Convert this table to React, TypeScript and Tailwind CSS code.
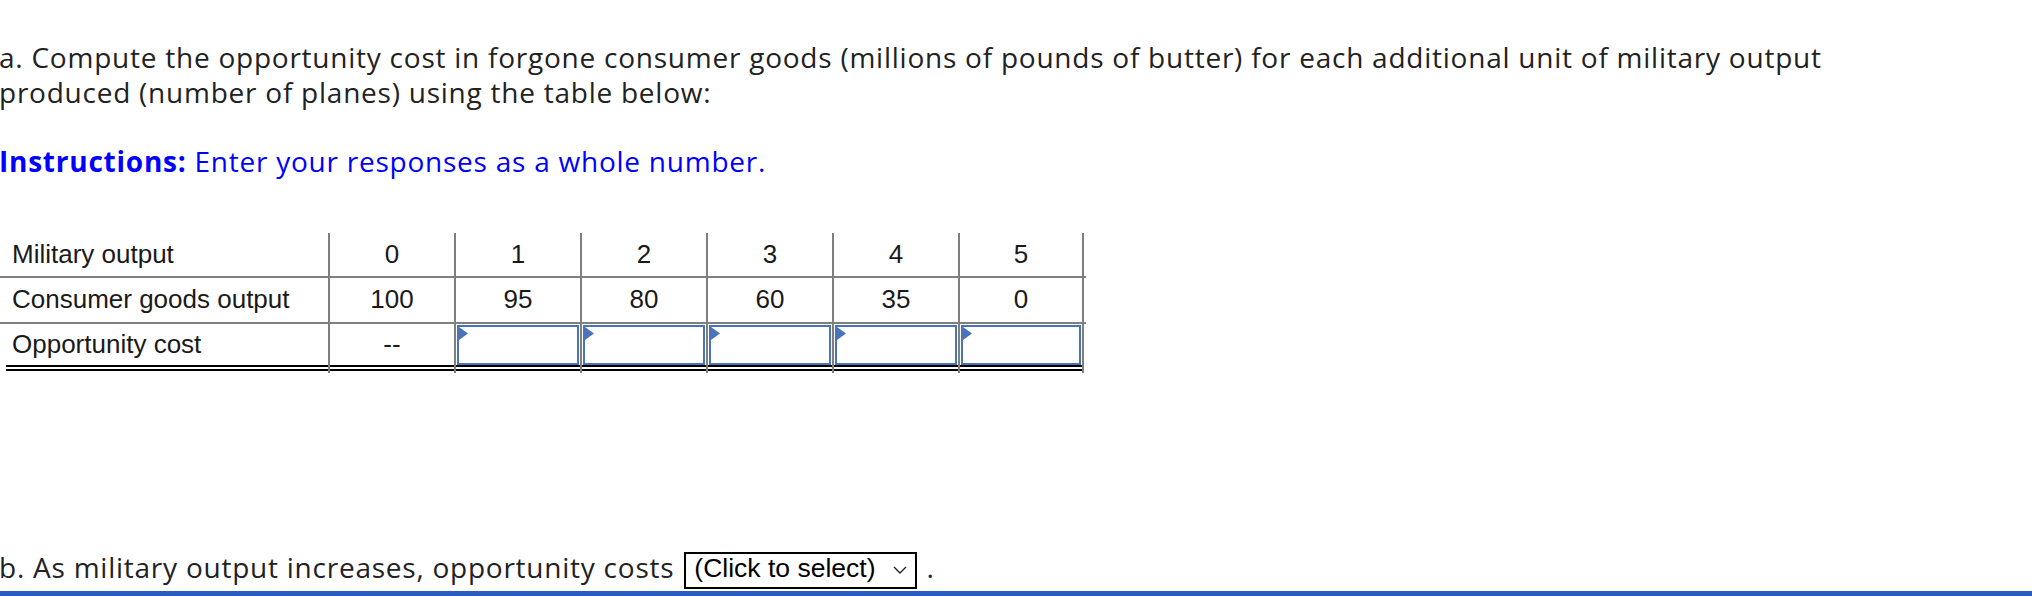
import React from "react"

const consumer = [100, 95, 80, 60, 35, 0]

const Row: React.FC<{ label: string; height: string; children: React.ReactNode; last?: boolean }> = ({
  label,
  height,
  children,
  last
}) => (
  <div className={`flex ${height} ${last ? "" : "border-b-2 border-[#7f7f7f]"}`}>
    <div className="w-[328px] pl-[12px] flex items-center">{label}</div>
    {children}
  </div>
)

export default function App() {
  return (
    <div className="w-[2032px] h-[596px] bg-white overflow-hidden flex flex-col font-['Open_Sans',sans-serif] text-[#222222]">
      {/* Part a */}
      <div className="pt-[40px] text-[28px] leading-[34.7px] tracking-[0.76px] -ml-[1px]">
        <p>
          a. Compute the opportunity cost in forgone consumer goods (millions of pounds of butter) for each additional
          unit of military output
          <br />
          produced (number of planes) using the table below:
        </p>
        <p className="mt-[34.7px] text-[#0000ff]">
          <span className="font-bold">Instructions:</span> Enter your responses as a whole number.
        </p>
      </div>

      {/* Table */}
      <div className="mt-[54px] w-[1086px] font-['Liberation_Sans',Arial,sans-serif] text-[26px] text-[#1a1a1a]">
        <Row label="Military output" height="h-[45px]">
          {[0, 1, 2, 3, 4, 5].map((n) => (
            <div
              key={n}
              className={`w-[126px] border-l-2 border-[#7f7f7f] flex items-center justify-center ${n === 5 ? "border-r-2" : ""}`}>
              {n}
            </div>
          ))}
        </Row>
        <Row label="Consumer goods output" height="h-[46px]">
          {consumer.map((n, i) => (
            <div
              key={i}
              className={`w-[126px] border-l-2 border-[#7f7f7f] flex items-center justify-center ${i === 5 ? "border-r-2" : ""}`}>
              {n}
            </div>
          ))}
        </Row>
        <Row label="Opportunity cost" height="h-[41px]" last>
          <div className="w-[126px] border-l-2 border-[#7f7f7f] flex items-center justify-center">--</div>
          {[1, 2, 3, 4, 5].map((n) => (
            <div
              key={n}
              className={`w-[126px] border-l-2 border-[#7f7f7f] px-[1px] pt-[1px] ${n === 5 ? "border-r-2" : ""}`}>
              <div className="relative h-full border-2 border-[#4a73b9] bg-white">
                <svg className="absolute left-0 top-0" width="10" height="14" viewBox="0 0 10 14">
                  <polygon points="0,0 9,6.5 0,13" fill="#4a73b9" />
                </svg>
              </div>
            </div>
          ))}
        </Row>
        {/* double rule */}
        <div className="flex">
          <div className="w-[328px] pl-[6px]">
            <div className="h-[2px] bg-black" />
            <div className="h-[2px] bg-black mt-[2px]" />
          </div>
          {[0, 1, 2, 3, 4, 5].map((n) => (
            <div key={n} className={`w-[126px] border-l-2 border-[#7f7f7f] h-[8px] ${n === 5 ? "border-r-2" : ""}`}>
              <div className="h-[2px] bg-black" />
              <div className="h-[2px] bg-black mt-[2px]" />
            </div>
          ))}
        </div>
      </div>

      {/* Part b */}
      <div className="mt-auto flex items-start text-[28px] tracking-[0.76px] pb-[2px] -ml-[1px]">
        <span className="leading-[31px]">b. As military output increases, opportunity costs</span>
        <div className="ml-[10px] h-[37px] border-2 border-black flex items-center pl-[8px] pr-[8px] pb-[4px] gap-[18px] font-['Liberation_Sans',Arial,sans-serif] text-[26.5px] tracking-normal text-black">
          <span>(Click to select)</span>
          <svg className="mt-[4px]" width="14" height="9" viewBox="0 0 14 9">
            <polyline points="1,1 7,7 13,1" fill="none" stroke="#222" strokeWidth="1.4" />
          </svg>
        </div>
        <span className="ml-[9px] leading-[31px]">.</span>
      </div>
      <div className="h-[5px] bg-[#285cc0] shrink-0" />
    </div>
  )
}
